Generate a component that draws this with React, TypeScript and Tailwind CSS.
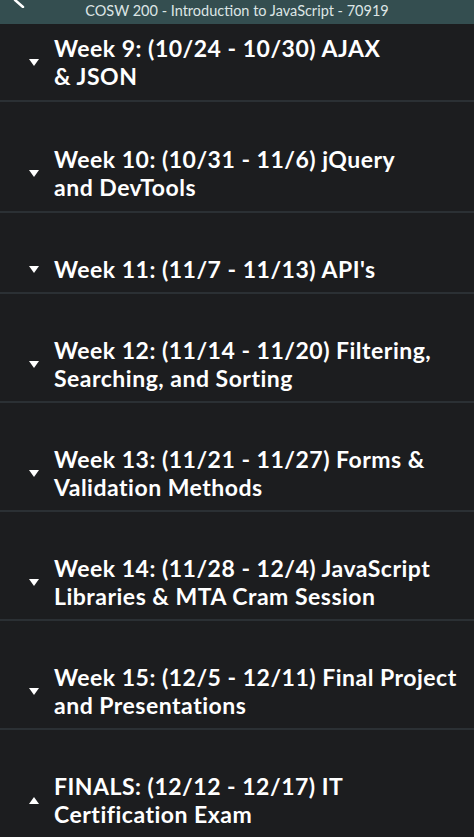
import React from "react";

interface IWeek {
    lines: string[];
    up?: boolean;
}

const weeks: IWeek[] = [
    { lines: ["Week 9: (10/24 - 10/30) AJAX", "& JSON"] },
    { lines: ["Week 10: (10/31 - 11/6) jQuery", "and DevTools"] },
    { lines: ["Week 11: (11/7 - 11/13) API's"] },
    { lines: ["Week 12: (11/14 - 11/20) Filtering,", "Searching, and Sorting"] },
    { lines: ["Week 13: (11/21 - 11/27) Forms &", "Validation Methods"] },
    { lines: ["Week 14: (11/28 - 12/4) JavaScript", "Libraries & MTA Cram Session"] },
    { lines: ["Week 15: (12/5 - 12/11) Final Project", "and Presentations"] },
    { lines: ["FINALS: (12/12 - 12/17) IT", "Certification Exam"], up: true },
];

const Caret = ({ up }: { up?: boolean }) => (
    <svg width="10" height="7" viewBox="0 0 10 7" className="shrink-0">
        {up ? <path d="M5 0 L10 7 L0 7 Z" fill="#ffffff" /> : <path d="M0 0 L10 0 L5 7 Z" fill="#ffffff" />}
    </svg>
);

const rowPad = (i: number) => {
    if (i === 0) return "pt-[10px] pb-[10px]";
    if (i === 1) return "pt-[43px] pb-[10px]";
    return "pt-[42px] pb-[9px]";
};

const WeekRow = ({ week, index }: { week: IWeek; index: number }) => (
    <div className={`flex items-center border-b-2 border-[#2b3034] pl-[29px] pr-3 ${rowPad(index)}`}>
        <div className="w-[25px]">
            <Caret up={week.up} />
        </div>
        <h3 className="text-[23px] leading-[28px] font-bold text-white tracking-[0.5px]">
            {week.lines.map((line, i) => (
                <span key={i} className="block whitespace-nowrap">{line}</span>
            ))}
        </h3>
    </div>
);

const App = () => {
    return (
        <div className="w-[474px] h-[837px] overflow-hidden bg-[#1c1d1f]" style={{ fontFamily: "Lato, 'Noto Sans', sans-serif" }}>
            <div className="relative h-[24px] bg-[#344e50] flex items-center justify-center">
                <svg width="16" height="16" viewBox="0 0 16 16" className="absolute left-[11px] top-[-8px]">
                    <path d="M12 1 L4 8 L12 15" stroke="#ffffff" strokeWidth="2.5" fill="none" strokeLinecap="round" strokeLinejoin="round" />
                </svg>
                <span className="text-[14.5px] text-[#dde5e5] leading-none -mt-[2px]">COSW 200 - Introduction to JavaScript - 70919</span>
            </div>
            <div>
                {weeks.map((w, i) => (
                    <WeekRow key={i} week={w} index={i} />
                ))}
            </div>
        </div>
    );
};

export default App;
